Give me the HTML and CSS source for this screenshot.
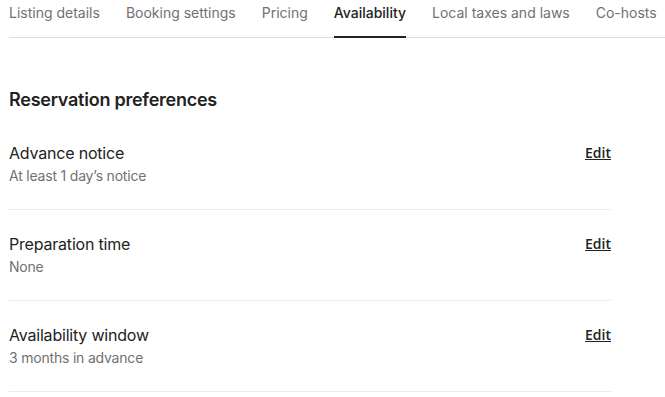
FILE: index.html
```html
<!DOCTYPE html>
<html lang="en">
<head>
    <meta charset="UTF-8">
    <meta name="viewport" content="width=device-width, initial-scale=1.0">
    <title>Availability</title>
    <link rel="stylesheet" href="styles.css">
</head>
<body>

    <div class="page">
        <nav class="tabs">
            <a class="tab">Listing details</a>
            <a class="tab">Booking settings</a>
            <a class="tab">Pricing</a>
            <a class="tab active">Availability</a>
            <a class="tab">Local taxes and laws</a>
            <a class="tab">Co-hosts</a>
        </nav>

        <section class="section">
            <h2>Reservation preferences</h2>

            <div class="row">
                <div class="info">
                    <div class="title">Advance notice</div>
                    <div class="value">At least 1 day’s notice</div>
                </div>
                <a class="edit">Edit</a>
            </div>

            <div class="row">
                <div class="info">
                    <div class="title">Preparation time</div>
                    <div class="value">None</div>
                </div>
                <a class="edit">Edit</a>
            </div>

            <div class="row">
                <div class="info">
                    <div class="title">Availability window</div>
                    <div class="value">3 months in advance</div>
                </div>
                <a class="edit">Edit</a>
            </div>
        </section>
    </div>

</body>
</html>
```

FILE: styles.css
```css
body {
    margin: 0;
    padding: 0;
    background-color: #fff;
    color: #222;
    font-family: 'Inter', 'Roboto', sans-serif;
}

.page {
    padding-left: 9px;
}

/* Tabs */
.tabs {
    display: flex;
    gap: 26px;
    border-bottom: 1px solid #ddd;
    white-space: nowrap;
}

.tab {
    font-size: 14px;
    line-height: 18px;
    color: #717171;
    padding: 4px 0 14px;
    border-bottom: 2px solid transparent;
    margin-bottom: -1px;
    cursor: pointer;
}

.tab.active {
    color: #222;
    font-weight: 500;
    border-bottom-color: #222;
}

/* Section */
.section {
    width: 602px;
}

.section h2 {
    font-size: 18px;
    line-height: 24px;
    font-weight: 600;
    letter-spacing: -0.25px;
    margin: 50px 0 7px;
}

.row {
    display: flex;
    justify-content: space-between;
    align-items: flex-start;
    padding: 24px 0;
    border-bottom: 1px solid #ebebeb;
}

.title {
    font-size: 16px;
    line-height: 20px;
    letter-spacing: -0.2px;
}

.value {
    font-size: 14px;
    line-height: 18px;
    letter-spacing: -0.2px;
    color: #717171;
    margin-top: 4px;
}

.edit {
    font-family: 'Open Sans', sans-serif;
    font-size: 14px;
    line-height: 20px;
    font-weight: 600;
    color: #222;
    text-decoration: underline;
    cursor: pointer;
}
```
